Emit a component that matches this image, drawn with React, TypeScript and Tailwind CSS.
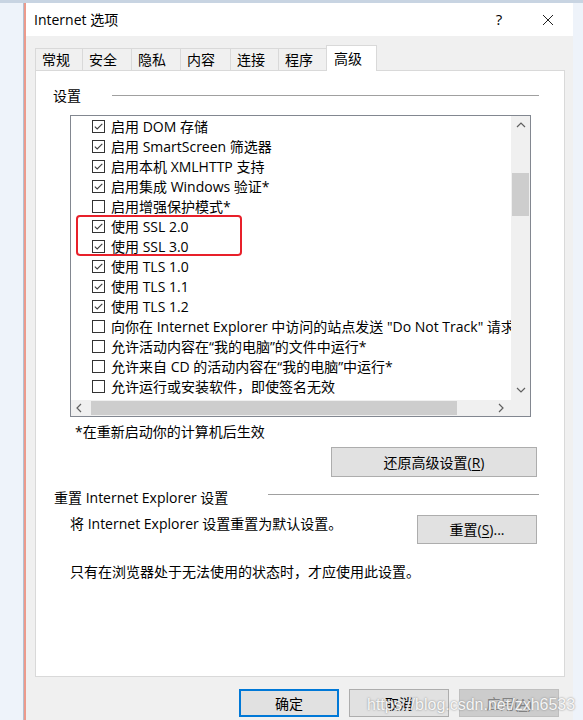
import React from 'react';

const ITEMS: [string, boolean][] = [
  ['启用 DOM 存储', true],
  ['启用 SmartScreen 筛选器', true],
  ['启用本机 XMLHTTP 支持', true],
  ['启用集成 Windows 验证*', true],
  ['启用增强保护模式*', false],
  ['使用 SSL 2.0', true],
  ['使用 SSL 3.0', true],
  ['使用 TLS 1.0', true],
  ['使用 TLS 1.1', true],
  ['使用 TLS 1.2', true],
  ['向你在 Internet Explorer 中访问的站点发送 "Do Not Track" 请求', false],
  ['允许活动内容在“我的电脑”的文件中运行*', false],
  ['允许来自 CD 的活动内容在“我的电脑”中运行*', false],
  ['允许运行或安装软件，即使签名无效', false],
  ['在安全和非安全模式之间转换时发出警告', false],
];

const TABS = [
  { label: '常规', w: 'w-[48px]' },
  { label: '安全', w: 'w-[49px]' },
  { label: '隐私', w: 'w-[49px]' },
  { label: '内容', w: 'w-[50px]' },
  { label: '连接', w: 'w-[48px]' },
  { label: '程序', w: 'w-[48px]' },
];

const CheckBox = ({ checked }: { checked: boolean }) => (
  <span className="w-[13px] h-[13px] border border-[#333333] bg-white flex items-center justify-center shrink-0">
    {checked && (
      <svg width="11" height="11" viewBox="0 0 11 11">
        <path d="M1.8 5.6 L4.2 8 L9.3 2.9" fill="none" stroke="#3c3c3c" strokeWidth="1.1" />
      </svg>
    )}
  </span>
);

const Chevron = ({ dir }: { dir: 'up' | 'down' | 'left' | 'right' }) => {
  const d = {
    up: 'M1 6 L5 2 L9 6',
    down: 'M1 3 L5 7 L9 3',
    left: 'M6 1 L2 5 L6 9',
    right: 'M3 1 L7 5 L3 9',
  }[dir];
  return (
    <svg width="10" height="10" viewBox="0 0 10 10">
      <path d={d} fill="none" stroke="#606060" strokeWidth="1.2" />
    </svg>
  );
};

const WinButton = ({ children, className = '' }: { children: React.ReactNode; className?: string }) => (
  <div className={`flex items-center justify-center bg-[#e1e1e1] border border-[#adadad] ${className}`}>{children}</div>
);

export default function App() {
  return (
    <div className="w-[583px] h-[720px] overflow-hidden bg-[#eef3fa] flex flex-col relative text-[14px] text-black font-['Open_Sans','Noto_Sans_CJK_SC',sans-serif]">
      <div className="h-[3px] shrink-0 bg-[#c8d4e2]" />
      <div className="flex flex-1 min-h-0">
        <div className="w-[24px] border-r border-[#b4c0cf]" />

        {/* dialog window */}
        <div className="w-[549px] border-l-2 border-[#ec9a8c] flex flex-col bg-[#f0f0f0]">
          {/* title bar */}
          <div className="h-[33px] bg-white flex items-center pl-[8px] pr-[2px] shrink-0">
            <span>Internet 选项</span>
            <div className="ml-auto flex items-center">
              <div className="w-[46px] text-center text-[15px]">?</div>
              <div className="w-[46px] ml-[3px] flex justify-center">
                <svg width="12" height="12" viewBox="0 0 12 12">
                  <path d="M1 1 L11 11 M11 1 L1 11" stroke="#222" strokeWidth="1" />
                </svg>
              </div>
            </div>
          </div>

          <div className="flex flex-col pl-[9px] pr-[8px] pt-[9px]">
            {/* tabs */}
            <div className="flex items-end h-[25px]">
              {TABS.map((t, i) => (
                <div
                  key={t.label}
                  className={`${t.w} h-[22px] bg-[#f0f0f0] border-t border-r border-[#d9d9d9] ${i === 0 ? 'border-l' : ''} flex items-center pl-[6px] text-[14px]`}
                >
                  {t.label}
                </div>
              ))}
              <div className="w-[51px] h-[26px] -mb-px relative z-10 bg-white border-t border-x border-[#d9d9d9] flex items-center pl-[7px] -ml-px">
                高级
              </div>
            </div>

            {/* panel */}
            <div className="h-[607px] bg-white border border-[#d9d9d9] flex flex-col">
              <div className="flex items-center h-[20px] mt-[14px] pl-[17px] pr-[25px]">
                <span>设置</span>
                <div className="flex-1 h-px bg-[#a0a0a0] ml-[31px]" />
              </div>

              {/* list box */}
              <div className="relative ml-[34px] mt-[10px] w-[461px] h-[302px] border border-[#828790] grid grid-cols-[440px_19px] grid-rows-[284px_16px]">
                <div className="overflow-hidden bg-white">
                  {ITEMS.map(([label, checked]) => (
                    <div key={label} className="h-[20px] flex items-center pl-[21px] gap-[6px] whitespace-nowrap">
                      <CheckBox checked={checked} />
                      <span>{label}</span>
                    </div>
                  ))}
                </div>

                {/* vertical scrollbar */}
                <div className="bg-[#f0f0f0] flex flex-col">
                  <div className="h-[20px] flex items-center justify-center">
                    <Chevron dir="up" />
                  </div>
                  <div className="h-[37px]" />
                  <div className="h-[43px] w-[17px] mx-auto bg-[#cdcdcd]" />
                  <div className="flex-1" />
                  <div className="h-[20px] flex items-center justify-center">
                    <Chevron dir="down" />
                  </div>
                </div>

                {/* horizontal scrollbar */}
                <div className="bg-[#f0f0f0] flex items-stretch">
                  <div className="w-[18px] flex items-center justify-center">
                    <Chevron dir="left" />
                  </div>
                  <div className="w-[366px] ml-[2px] my-[1px] bg-[#cdcdcd]" />
                  <div className="ml-auto w-[20px] flex items-center justify-center">
                    <Chevron dir="right" />
                  </div>
                </div>
                <div className="bg-[#f0f0f0]" />

                {/* highlight drawn over the SSL options */}
                <div className="absolute left-[5px] top-[99px] w-[166px] h-[41px] border-2 border-[#e8202a] rounded-[4px]" />
              </div>

              <div className="h-[20px] mt-[4px] ml-[39px] flex items-center">*在重新启动你的计算机后生效</div>

              <WinButton className="self-end mr-[27px] mt-[6px] w-[206px] h-[30px]">
                还原高级设置(<span className="underline underline-offset-2">R</span>)
              </WinButton>

              <div className="flex items-center h-[20px] mt-[10px] pl-[18px] pr-[25px]">
                <span>重置 Internet Explorer 设置</span>
                <div className="flex-1 h-px bg-[#a0a0a0] ml-[40px] -mt-[6px]" />
              </div>

              <div className="flex items-start mt-[6px] pl-[34px] pr-[27px]">
                <div className="h-[20px] flex items-center">将 Internet Explorer 设置重置为默认设置。</div>
                <WinButton className="ml-auto mt-[2px] w-[120px] h-[29px]">
                  重置(<span className="underline underline-offset-2">S</span>)...
                </WinButton>
              </div>

              <div className="h-[20px] mt-[17px] ml-[34px] flex items-center">只有在浏览器处于无法使用的状态时，才应使用此设置。</div>
            </div>

            {/* dialog buttons */}
            <div className="flex justify-end gap-[10px] pr-[6px] mt-[12px]">
              <div className="w-[100px] h-[28px] flex items-center justify-center bg-[#e1e1e1] border-2 border-[#0078d7]">确定</div>
              <WinButton className="w-[100px] h-[28px]">取消</WinButton>
              <div className="w-[100px] h-[28px] flex items-center justify-center bg-[#cccccc] border border-[#bfbfbf] text-[#838383]">
                应用(<span className="underline underline-offset-2">A</span>)
              </div>
            </div>
          </div>
        </div>

        <div className="flex-1" />
      </div>

      {/* blog watermark */}
      <div className="absolute left-[367px] top-[693px] text-[16px] text-white/90 font-['Liberation_Sans',Arial,sans-serif] [text-shadow:0_0_2px_#7a7a7a] pointer-events-none">
        https://blog.csdn.net/zxh6533
      </div>
    </div>
  );
}
